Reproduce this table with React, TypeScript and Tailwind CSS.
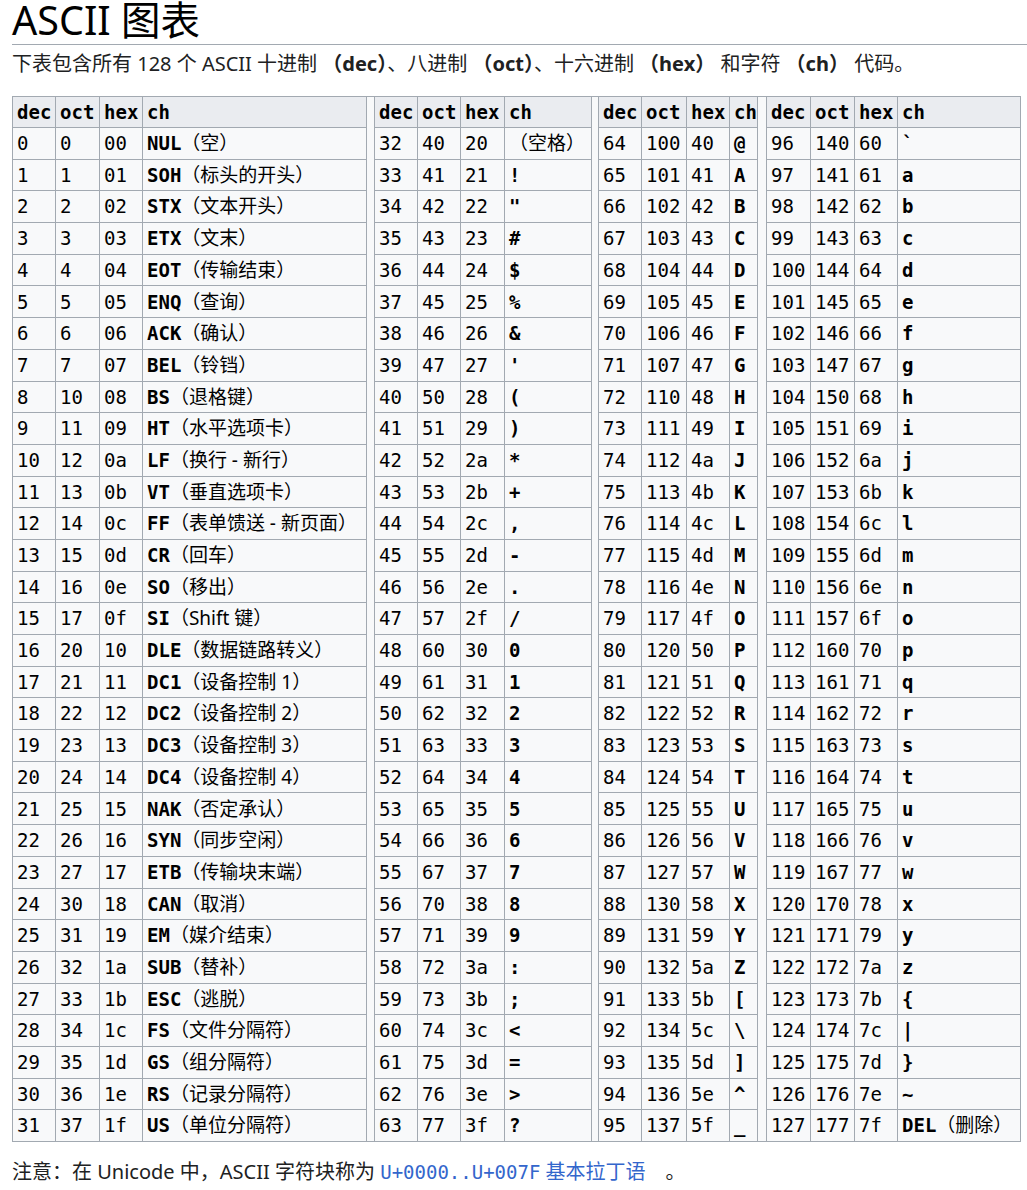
import React from 'react';

// control codes 0-31 with their chinese names
const CONTROL: [string, string][] = [
  ['NUL', '空'],
  ['SOH', '标头的开头'],
  ['STX', '文本开头'],
  ['ETX', '文末'],
  ['EOT', '传输结束'],
  ['ENQ', '查询'],
  ['ACK', '确认'],
  ['BEL', '铃铛'],
  ['BS', '退格键'],
  ['HT', '水平选项卡'],
  ['LF', '换行 - 新行'],
  ['VT', '垂直选项卡'],
  ['FF', '表单馈送 - 新页面'],
  ['CR', '回车'],
  ['SO', '移出'],
  ['SI', 'Shift 键'],
  ['DLE', '数据链路转义'],
  ['DC1', '设备控制 1'],
  ['DC2', '设备控制 2'],
  ['DC3', '设备控制 3'],
  ['DC4', '设备控制 4'],
  ['NAK', '否定承认'],
  ['SYN', '同步空闲'],
  ['ETB', '传输块末端'],
  ['CAN', '取消'],
  ['EM', '媒介结束'],
  ['SUB', '替补'],
  ['ESC', '逃脱'],
  ['FS', '文件分隔符'],
  ['GS', '组分隔符'],
  ['RS', '记录分隔符'],
  ['US', '单位分隔符'],
];

const mono = "font-['DejaVu_Sans_Mono','Noto_Sans_CJK_SC',monospace]";
const sans = "font-['Noto_Sans','Noto_Sans_CJK_SC',sans-serif]";
const cell = 'border border-[#a2a9b1] p-0 text-left align-middle';
const inner = 'flex items-center h-[30.7px] px-[4px] whitespace-nowrap overflow-hidden';

const colWidths = [
  ['w-[43px]', 'w-[44px]', 'w-[43px]', 'w-[224px]'],
  ['w-[43px]', 'w-[43px]', 'w-[44px]', 'w-[87px]'],
  ['w-[43px]', 'w-[45px]', 'w-[43px]', 'w-[28px]'],
  ['w-[44px]', 'w-[44px]', 'w-[43px]', 'w-[123px]'],
];
const sepWidths = ['w-[8px]', 'w-[7px]', 'w-[9px]'];

const CharCell: React.FC<{ code: number }> = ({ code }) => {
  if (code < 32) {
    const [name, desc] = CONTROL[code];
    return (
      <>
        <b className={mono}>{name}</b>
        <span className={sans}>（{desc}）</span>
      </>
    );
  }
  if (code === 32) return <span className={sans}>（空格）</span>;
  if (code === 127) {
    return (
      <>
        <b className={mono}>DEL</b>
        <span className={sans}>（删除）</span>
      </>
    );
  }
  return <b className={mono}>{String.fromCharCode(code)}</b>;
};

const App: React.FC = () => {
  const rows = Array.from({ length: 32 }, (_, r) => r);

  return (
    <div className="min-h-screen bg-white pl-3 text-[#202122]">
      <h1 className={`${sans} text-[39.5px] font-normal leading-[40px] pb-[4px] border-b border-[#a2a9b1] text-black`}>
        ASCII 图表
      </h1>
      <p className={`${sans} text-[20px] leading-[28px] mt-[5px] mb-[18px]`}>
        下表包含所有 128 个 ASCII 十进制 <b>（dec）</b>、八进制 <b>（oct）</b>、十六进制 <b>（hex）</b> 和字符 <b>（ch）</b> 代码。
      </p>

      <table className={`${mono} w-[1008px] table-fixed border-collapse text-[19px] text-black`}>
        <colgroup>
          {colWidths.map((g, gi) => (
            <React.Fragment key={gi}>
              {g.map((w, ci) => (
                <col key={ci} className={w} />
              ))}
              {gi < 3 && <col className={sepWidths[gi]} />}
            </React.Fragment>
          ))}
        </colgroup>
        <tbody>
          <tr>
            {[0, 1, 2, 3].map(g => (
              <React.Fragment key={g}>
                {['dec', 'oct', 'hex', 'ch'].map(h => (
                  <th key={h} className={`${cell} bg-[#eaecf0] font-bold`}>
                    <div className={`${inner} h-[30px]`}>{h}</div>
                  </th>
                ))}
                {g < 3 && <td rowSpan={33} className="border border-[#a2a9b1] bg-[#f8f9fa] p-0" />}
              </React.Fragment>
            ))}
          </tr>
          {rows.map(r => (
            <tr key={r}>
              {[0, 1, 2, 3].map(g => {
                const code = g * 32 + r;
                return (
                  <React.Fragment key={g}>
                    <td className={`${cell} bg-[#f8f9fa]`}>
                      <div className={inner}>{code}</div>
                    </td>
                    <td className={`${cell} bg-[#f8f9fa]`}>
                      <div className={inner}>{code.toString(8)}</div>
                    </td>
                    <td className={`${cell} bg-[#f8f9fa]`}>
                      <div className={inner}>{code.toString(16).padStart(2, '0')}</div>
                    </td>
                    <td className={`${cell} bg-[#f8f9fa]`}>
                      <div className={inner}>
                        <CharCell code={code} />
                      </div>
                    </td>
                  </React.Fragment>
                );
              })}
            </tr>
          ))}
        </tbody>
      </table>

      <p className={`${sans} text-[20px] leading-[28px] mt-[16px]`}>
        注意：在 Unicode 中，ASCII 字符块称为{' '}
        <a href="#" className="text-[#3366cc]">
          <span className={`${mono} text-[19px]`}>U+0000..U+007F</span> 基本拉丁语
        </a>
        {'　'}。
      </p>
    </div>
  );
};

export default App;
